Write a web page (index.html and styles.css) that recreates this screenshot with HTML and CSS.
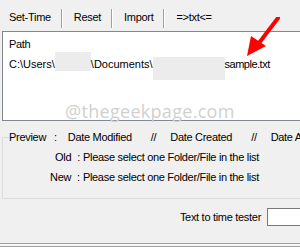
FILE: index.html
```html
<!DOCTYPE html>
<html>
<head>
<meta charset="utf-8">
<link rel="stylesheet" href="styles.css">
</head>
<body>
<div class="app">
  <div class="toolbar">
    <span class="tool">Set-Time</span>
    <span class="sep"></span>
    <span class="tool">Reset</span>
    <span class="sep"></span>
    <span class="tool">Import</span>
    <span class="sep"></span>
    <span class="tool">=&gt;txt&lt;=</span>
  </div>
  <div class="pathbox">
    <div class="label">Path</div>
    <div class="pathline"><span>C:\Users\</span><span class="blur blur-user"></span><span>\Documents\</span><span class="blur blur-folder"></span><span class="file">sample.txt</span></div>
    <div class="watermark">@thegeekpage.com</div>
    <svg class="arrow" width="40" height="44" viewBox="0 0 40 44">
      <line x1="36" y1="1" x2="17" y2="26" stroke="#ff0000" stroke-width="4" stroke-linecap="round"/>
      <polygon points="5,39 9,19 24,29" fill="#ff0000"/>
    </svg>
  </div>
  <fieldset class="preview">
    <legend class="legend"><span class="lg-title">Preview</span><span class="lg-colon">:</span><span>Date Modified</span><span class="lg-sl">//</span><span>Date Created</span><span class="lg-sl">//</span><span>Date A</span></legend>
    <div class="row row-old"><span class="key">Old</span><span class="colon">:</span><span>Please select one Folder/File in the list</span></div>
    <div class="row row-new"><span class="key">New</span><span class="colon">:</span><span>Please select one Folder/File in the list</span></div>
  </fieldset>
  <div class="tester">
    <span class="tester-label">Text to time tester</span>
    <span class="tester-input"></span>
  </div>
  <div class="statusline"></div>
</div>
</body>
</html>
```
FILE: styles.css
```css
html, body {
  margin: 0;
  padding: 0;
  background: #f0f0f0;
  overflow: hidden;
}
body {
  font-family: "Liberation Sans", Arial, sans-serif;
  font-size: 11px;
  letter-spacing: -0.3px;
  color: #000;
  width: 300px;
  height: 247px;
}
.app {
  width: 300px;
  height: 247px;
  display: flex;
  flex-direction: column;
  overflow: hidden;
}
.toolbar {
  height: 31px;
  flex: 0 0 31px;
  display: flex;
  align-items: flex-start;
  padding-left: 9px;
  box-sizing: border-box;
}
.tool {
  margin-top: 11px;
  line-height: 13px;
  white-space: nowrap;
}
.sep {
  width: 1px;
  height: 19px;
  margin: 9px 12px 0 10px;
  background: #a0a0a0;
  box-shadow: 1px 0 0 #ffffff;
}
.pathbox {
  position: relative;
  margin-left: 2px;
  width: 310px;
  height: 90px;
  flex: 0 0 90px;
  box-sizing: border-box;
  border: 1px solid #828790;
  background: #ffffff;
  padding: 6px 0 0 6px;
}
.label {
  line-height: 13px;
}
.pathline {
  margin-top: 7px;
  display: flex;
  align-items: flex-start;
  line-height: 13px;
  white-space: nowrap;
  letter-spacing: 0;
}
.file {
  letter-spacing: -0.5px;
}
.blur {
  display: inline-block;
  background: #ececec;
}
.blur-user {
  width: 36px;
  height: 19px;
  margin-top: -6px;
}
.blur-folder {
  width: 72px;
  height: 23px;
  margin-top: -1px;
}
.watermark {
  position: absolute;
  left: 62px;
  top: 67px;
  font-family: "Open Sans", sans-serif;
  font-size: 18px;
  letter-spacing: 0.3px;
  color: #d0d0d0;
  line-height: 24px;
}
.arrow {
  position: absolute;
  left: 239px;
  top: -15px;
}
.preview {
  margin: 10px 0 0 2px;
  padding: 0;
  width: 310px;
  height: 68px;
  flex: 0 0 auto;
  box-sizing: border-box;
  border: 1px solid #dcdcdc;
}
.legend {
  padding: 0;
  margin-left: 6px;
  display: flex;
  white-space: nowrap;
  line-height: 13px;
}
.lg-colon {
  margin: 0 11px 0 8px;
}
.lg-sl {
  margin: 0 14px 0 19px;
}
.row {
  display: flex;
  white-space: nowrap;
  line-height: 13px;
}
.row-old {
  margin: 7px 0 0 52px;
}
.row-new {
  margin: 7px 0 0 47px;
}
.colon {
  margin: 0 3px 0 6px;
}
.tester {
  display: flex;
  align-items: center;
  justify-content: flex-end;
  height: 18px;
  margin-top: 9px;
  margin-right: -37px;
}
.tester-label {
  margin-right: 6px;
  line-height: 13px;
}
.tester-input {
  width: 70px;
  height: 18px;
  box-sizing: border-box;
  border: 1px solid #7a7a7a;
  background: #ffffff;
}
.statusline {
  margin-top: auto;
  height: 4px;
  box-sizing: border-box;
  border-top: 1px solid #a0a0a0;
  border-bottom: 1px solid #a0a0a0;
  background: #f7f7f7;
}
```
